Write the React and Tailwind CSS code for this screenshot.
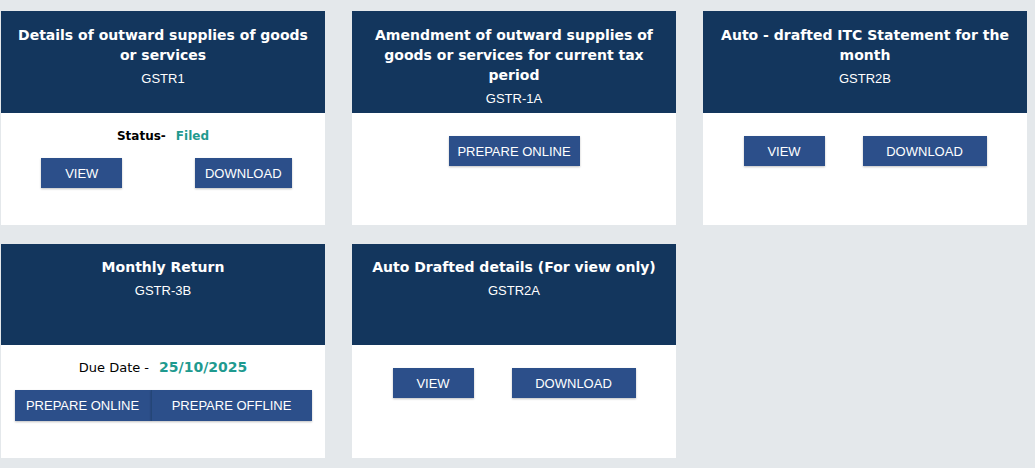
const titleFont = { fontFamily: '"DejaVu Sans", Verdana, sans-serif' };
const bodyFont = { fontFamily: '"Liberation Sans", Arial, sans-serif' };

function Btn({ children, className = "" }) {
  return (
    <button
      style={bodyFont}
      className={`h-[30px] bg-[#2c4f8a] text-white text-[13px] leading-none shadow-[0_1px_2px_rgba(0,0,0,0.25)] ${className}`}
    >
      {children}
    </button>
  );
}

function Card({ title, code, low, children }) {
  return (
    <div className="flex flex-col w-[324px] h-[214px] bg-white">
      <div
        className={`${low ? "h-[101px] pt-[13px]" : "h-[102px] pt-[14px]"} bg-[#13365d] px-[10px] text-center text-white`}
      >
        <h3 style={titleFont} className="text-[14px] font-bold leading-[20px]">
          {title}
        </h3>
        <p style={bodyFont} className="mt-[5px] text-[13px] leading-[18px]">
          {code}
        </p>
      </div>
      <div className="flex-1">{children}</div>
    </div>
  );
}

export default function App() {
  return (
    <div className="min-h-screen bg-[#e4e8eb] pl-[1px] pt-[11px]">
      <div className="grid grid-cols-[324px_324px_324px] gap-x-[27px] gap-y-[19px]">
        <Card title="Details of outward supplies of goods or services" code="GSTR1">
          <p style={titleFont} className="mt-[14px] text-center text-[12px] leading-[18px] font-bold">
            <span className="text-black">Status-</span>
            <span className="ml-[10px] text-[#1f9a8f]">Filed</span>
          </p>
          <div className="mt-[13px] grid grid-cols-2 pr-[1px]">
            <div className="flex justify-center">
              <Btn className="w-[81px]">VIEW</Btn>
            </div>
            <div className="flex justify-center">
              <Btn className="w-[97px]">DOWNLOAD</Btn>
            </div>
          </div>
        </Card>

        <Card title="Amendment of outward supplies of goods or services for current tax period" code="GSTR-1A">
          <div className="mt-[23px] flex justify-center">
            <Btn className="w-[131px] h-[29px]">PREPARE ONLINE</Btn>
          </div>
        </Card>

        <Card title="Auto - drafted ITC Statement for the month" code="GSTR2B">
          <div className="mt-[23px] flex justify-center gap-[38px]">
            <Btn className="w-[81px]">VIEW</Btn>
            <Btn className="w-[124px]">DOWNLOAD</Btn>
          </div>
        </Card>

        <Card low title="Monthly Return" code="GSTR-3B">
          <p className="mt-[13px] text-center text-[13px] leading-[18px]">
            <span style={titleFont} className="text-black">Due Date -</span>
            <span style={titleFont} className="ml-[10px] text-[14px] font-bold text-[#1f9a8f]">
              25/10/2025
            </span>
          </p>
          <div className="mt-[13px] flex justify-center">
            <Btn className="w-[136px] h-[31px]">PREPARE ONLINE</Btn>
            <Btn className="w-[161px] h-[31px] border-l border-[#244677]">PREPARE OFFLINE</Btn>
          </div>
        </Card>

        <Card low title="Auto Drafted details (For view only)" code="GSTR2A">
          <div className="mt-[23px] flex justify-center gap-[38px]">
            <Btn className="w-[81px]">VIEW</Btn>
            <Btn className="w-[124px]">DOWNLOAD</Btn>
          </div>
        </Card>
      </div>
    </div>
  );
}
